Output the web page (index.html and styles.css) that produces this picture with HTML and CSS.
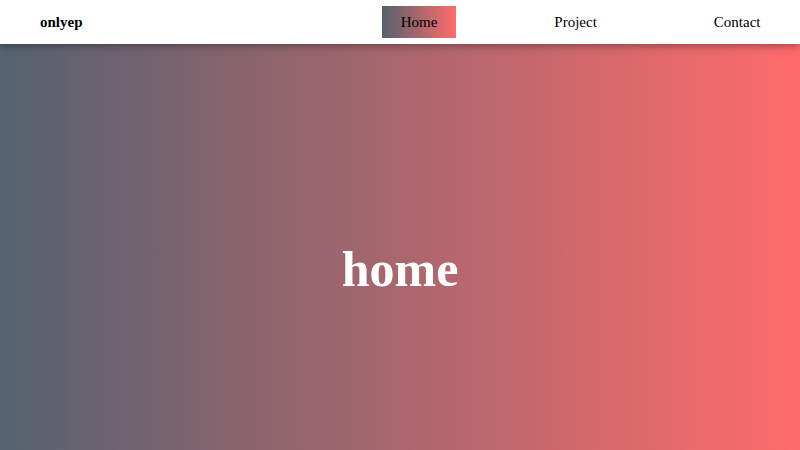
FILE: index.html
```html
<!DOCTYPE html>
<html lang="en">
<head>
<meta charset="utf-8">
<title>onlyep</title>
<link rel="stylesheet" href="styles.css">
</head>
<body>
<header class="topbar">
  <div class="brand">onlyep</div>
  <nav class="nav">
    <a class="nav-link active" href="#">Home</a>
    <a class="nav-link" href="#">Project</a>
    <a class="nav-link" href="#">Contact</a>
  </nav>
</header>
<main class="hero">
  <h1 class="hero-title">home</h1>
</main>
</body>
</html>
```
FILE: styles.css
```css
* { box-sizing: border-box; }
html, body { margin: 0; padding: 0; }
body {
  font-family: "Liberation Serif", "Times New Roman", serif;
  color: #000;
  background: #fff;
}
.topbar {
  position: relative;
  z-index: 2;
  height: 44px;
  display: flex;
  align-items: center;
  justify-content: space-between;
  padding: 0 21px 0 40px;
  background: #fff;
  box-shadow: 0 2px 8px rgba(0, 0, 0, 0.35);
}
.brand {
  font-weight: bold;
  font-size: 15px;
}
.nav {
  display: flex;
  gap: 80px;
  align-items: center;
}
.nav-link {
  display: block;
  height: 32px;
  line-height: 33px;
  padding: 0 18.5px;
  font-size: 15px;
  color: #000;
  text-decoration: none;
}
.nav-link.active {
  background: linear-gradient(to right, #556270, #ff6b6b);
}
.hero {
  height: 100vh;
  display: flex;
  align-items: center;
  justify-content: center;
  background: linear-gradient(to right, #556270, #ff6b6b);
}
.hero-title {
  margin: 0;
  color: #fff;
  font-size: 50px;
  font-weight: bold;
}
```
